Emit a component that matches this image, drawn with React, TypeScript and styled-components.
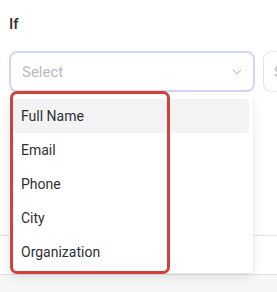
import styled, { createGlobalStyle } from 'styled-components';

const GlobalStyle = createGlobalStyle`
  html, body {
    margin: 0;
    padding: 0;
    background: #ffffff;
    font-family: Roboto, 'Liberation Sans', sans-serif;
  }
`;

const Page = styled.div`
  position: relative;
  width: 277px;
  height: 292px;
  overflow: hidden;
  background: #ffffff;
`;

const Form = styled.div`
  display: flex;
  flex-direction: column;
  padding: 15px 0 0 9px;
`;

const Label = styled.div`
  font-size: 15px;
  font-weight: 500;
  color: #2f3033;
  line-height: 18px;
  height: 18px;
`;

const SelectRow = styled.div`
  display: flex;
  gap: 8px;
  margin-top: 18px;
`;

const SelectBox = styled.div<{ $focused?: boolean; $width: number }>`
  box-sizing: border-box;
  flex: none;
  width: ${(p) => p.$width}px;
  height: 41px;
  display: flex;
  align-items: center;
  justify-content: space-between;
  padding: 0 11px 0 ${(p) => (p.$focused ? 11 : 10)}px;
  border: ${(p) => (p.$focused ? '2px solid #cfd8f0' : '1px solid #e3e4e8')};
  border-radius: 8px;
  background: #ffffff;
`;

const Placeholder = styled.span`
  font-size: 15px;
  color: #b9bac0;
`;

const Section = styled.div`
  display: flex;
  flex-direction: column;
  margin-top: 143px;
`;

const Divider = styled.div`
  height: 1px;
  background: #e2e2e4;
`;

const Footer = styled.div`
  margin-top: 38px;
  height: 20px;
  border-top: 1px solid #e2e2e4;
  background: #f6f6f7;
`;

const Menu = styled.div`
  position: absolute;
  left: 9px;
  top: 95px;
  width: 244px;
  box-sizing: border-box;
  padding: 4px;
  background: #ffffff;
  border-radius: 4px;
  box-shadow: 0 4px 12px rgba(0, 0, 0, 0.09), 0 1px 3px rgba(0, 0, 0, 0.05);
`;

const Option = styled.div<{ $active?: boolean }>`
  height: 34px;
  display: flex;
  align-items: center;
  padding-left: 8px;
  border-radius: 4px;
  font-size: 14px;
  color: #2f3033;
  background: ${(p) => (p.$active ? '#f3f3f5' : 'transparent')};
`;

const Highlight = styled.div`
  position: absolute;
  left: 10px;
  top: 91px;
  width: 160px;
  height: 183px;
  box-sizing: border-box;
  border: 3px solid #d2403c;
  border-radius: 7px;
  pointer-events: none;
`;

const options = ['Full Name', 'Email', 'Phone', 'City', 'Organization'];

function Chevron() {
  return (
    <svg width='10' height='6' viewBox='0 0 10 6' fill='none'>
      <path d='M1 1 L5 5 L9 1' stroke='#b3b5bb' strokeWidth='1' strokeLinecap='round' strokeLinejoin='round' />
    </svg>
  );
}

export default function App() {
  return (
    <Page>
      <GlobalStyle />
      <Form>
        <Label>If</Label>
        <SelectRow>
          <SelectBox $focused $width={246}>
            <Placeholder>Select</Placeholder>
            <Chevron />
          </SelectBox>
          <SelectBox $width={120}>
            <Placeholder>Select</Placeholder>
          </SelectBox>
        </SelectRow>
      </Form>
      <Section>
        <Divider />
        <Footer />
      </Section>
      <Menu>
        {options.map((o, i) => (
          <Option key={o} $active={i === 0}>
            {o}
          </Option>
        ))}
      </Menu>
      <Highlight />
    </Page>
  );
}
